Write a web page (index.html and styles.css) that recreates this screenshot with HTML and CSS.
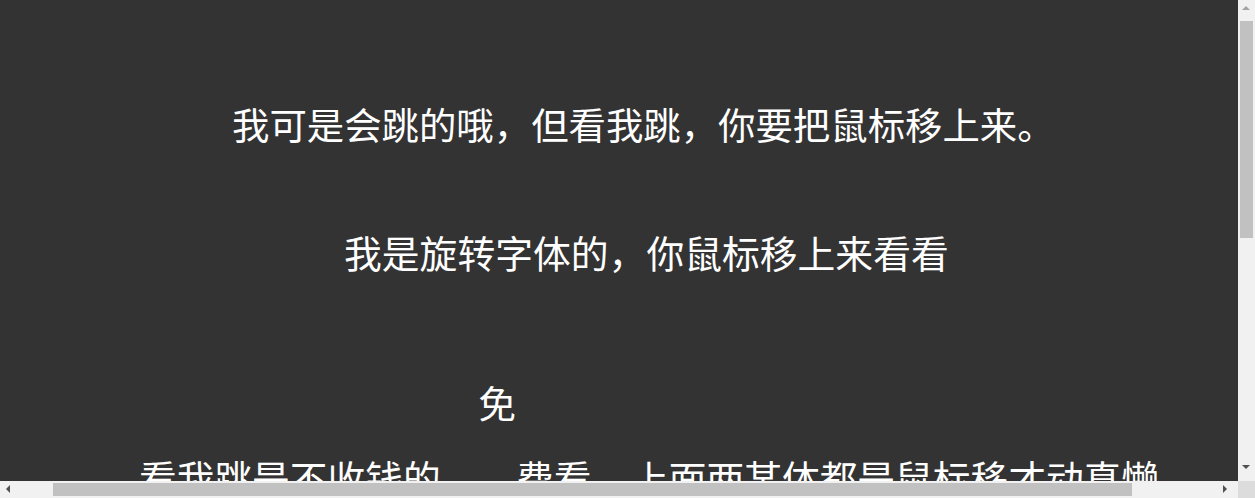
FILE: index.html
```html
<!DOCTYPE html>
<html lang="zh-CN">
<head>
<meta charset="utf-8">
<title>跳动的文字</title>
<link rel="stylesheet" href="styles.css">
</head>
<body>
<div class="page">
  <p class="line line-jump">我可是会跳的哦，但看我跳，你要把鼠标移上来。</p>
  <p class="line line-rotate">我是旋转字体的，你鼠标移上来看看</p>
  <p class="line line-free"><span>看</span><span>我</span><span>跳</span><span>是</span><span>不</span><span>收</span><span>钱</span><span>的</span><span>，</span><span class="up">免</span><span>费</span><span>看</span><span>，</span><span class="gap"></span><span>上</span><span>面</span><span>两</span><span>某</span><span>体</span><span>都</span><span>是</span><span>鼠</span><span>标</span><span>移</span><span>才</span><span>动</span><span>真</span><span>懒</span></p>
</div>
<div class="sb-v">
  <span class="arrow arrow-up"></span>
  <span class="thumb-v"></span>
  <span class="arrow arrow-down"></span>
</div>
<div class="sb-h">
  <span class="arrow arrow-left"></span>
  <span class="thumb-h"></span>
  <span class="arrow arrow-right"></span>
</div>
<div class="sb-corner"></div>
</body>
</html>
```
FILE: styles.css
```css
html, body {
  margin: 0;
  padding: 0;
}
html {
  overflow: hidden;
}
body {
  background: #333333;
  color: #ffffff;
  font-family: "Noto Sans CJK SC", "Noto Sans", sans-serif;
}
.page {
  width: 1238px;
  height: 498px;
  padding-top: 106px;
  box-sizing: border-box;
  overflow: hidden;
}
.line {
  margin: 0;
  font-size: 37px;
  line-height: 37px;
  white-space: nowrap;
}
.line-jump {
  padding-left: 232px;
  font-size: 37.4px;
}
.line-rotate {
  margin-top: 90px;
  padding-left: 344px;
  font-size: 37.8px;
}
.line-free {
  margin-top: 188px;
  padding-left: 139px;
  font-size: 37.7px;
}
.line-free span {
  display: inline-block;
}
.line-free .up {
  transform: translateY(-75px);
}
.line-free .gap {
  width: 2px;
}

/* scrollbars drawn over the page */
.sb-v {
  position: fixed;
  top: 0;
  right: 0;
  width: 17px;
  height: 481px;
  background: #f1f1f1;
}
.sb-h {
  position: fixed;
  left: 0;
  bottom: 0;
  width: 1238px;
  height: 17px;
  background: #f1f1f1;
}
.sb-corner {
  position: fixed;
  right: 0;
  bottom: 0;
  width: 17px;
  height: 17px;
  background: #dcdcdc;
}
.thumb-v {
  position: absolute;
  left: 2px;
  top: 21px;
  width: 13px;
  height: 217px;
  background: #c1c1c1;
}
.thumb-h {
  position: absolute;
  top: 2px;
  left: 53px;
  width: 1079px;
  height: 13px;
  background: #c1c1c1;
}
.arrow {
  position: absolute;
  width: 0;
  height: 0;
}
.arrow-up {
  left: 4px;
  top: 6px;
  border-left: 4px solid transparent;
  border-right: 4px solid transparent;
  border-bottom: 4px solid #a3a3a3;
}
.arrow-down {
  left: 4px;
  top: 465px;
  border-left: 4px solid transparent;
  border-right: 4px solid transparent;
  border-top: 4px solid #505050;
}
.arrow-left {
  left: 6px;
  top: 4px;
  border-top: 4px solid transparent;
  border-bottom: 4px solid transparent;
  border-right: 4px solid #505050;
}
.arrow-right {
  left: 1223px;
  top: 4px;
  border-top: 4px solid transparent;
  border-bottom: 4px solid transparent;
  border-left: 4px solid #505050;
}
```
